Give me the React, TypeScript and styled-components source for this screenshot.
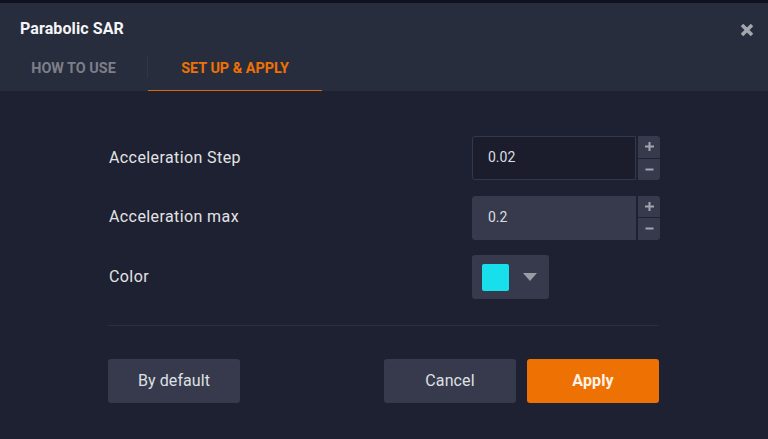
import React from 'react';
import styled, { createGlobalStyle } from 'styled-components';

const GlobalStyle = createGlobalStyle`
  html, body {
    margin: 0;
    padding: 0;
    background: #1e2131;
  }
  body {
    font-family: Roboto, "Liberation Sans", sans-serif;
  }
`;

const Modal = styled.div`
  width: 768px;
  height: 439px;
  overflow: hidden;
  background: #1e2131;
  border-top: 3px solid #11121f;
  box-sizing: border-box;
`;

const Header = styled.header`
  position: relative;
  height: 88px;
  background: #282d3d;
  display: flex;
  flex-direction: column;
  box-sizing: border-box;
  padding-top: 16px;
`;

const Title = styled.h1`
  margin: 0 0 0 20px;
  font-size: 16px;
  line-height: 20px;
  font-weight: 700;
  letter-spacing: 0.1px;
  color: #f4f5f6;
`;

const CloseButton = styled.button`
  position: absolute;
  top: 20px;
  right: 14px;
  width: 14px;
  height: 14px;
  padding: 0;
  border: 0;
  background: none;
  display: flex;
`;

const Tabs = styled.nav`
  display: flex;
  margin-top: auto;
  height: 36px;
`;

const Tab = styled.div<{ $active?: boolean }>`
  display: flex;
  align-items: center;
  justify-content: center;
  box-sizing: border-box;
  height: 100%;
  font-size: 14.4px;
  font-weight: 700;
  padding-bottom: 9px;
  padding-right: ${p => (p.$active ? '0' : '1px')};
  color: ${p => (p.$active ? '#ee7203' : '#7c7f8a')};
  width: ${p => (p.$active ? '174px' : '148px')};
  border-bottom: 1px solid ${p => (p.$active ? '#d9690b' : 'transparent')};
`;

const TabSep = styled.span`
  width: 1px;
  height: 22px;
  background: #31364a;
  margin: 1px 0 0 -1px;
`;

const Body = styled.main`
  padding: 45px 109px 0 108px;
  display: flex;
  flex-direction: column;
`;

const Row = styled.div`
  display: flex;
  align-items: center;
  justify-content: space-between;
  height: 44px;
  margin-bottom: 15.5px;
`;

const Label = styled.label`
  font-size: 16px;
  color: #e2e3e6;
  letter-spacing: 0.4px;
  margin-left: 1px;
  padding-bottom: 2px;
`;

const Field = styled.div`
  display: flex;
  width: 188px;
  height: 44px;
  gap: 2px;
  margin-right: -1px;
`;

const Input = styled.div<{ $focused?: boolean }>`
  flex: 1;
  box-sizing: border-box;
  display: flex;
  align-items: center;
  padding: 0 0 2px 15px;
  font-size: 14px;
  color: #dcdde0;
  border-radius: 3px 0 0 3px;
  background: ${p => (p.$focused ? '#1b1d2c' : '#363a4c')};
  border: 1px solid ${p => (p.$focused ? '#33384a' : '#363a4c')};
`;

const Steppers = styled.div`
  width: 22px;
  display: flex;
  flex-direction: column;
  gap: 1px;
`;

const Step = styled.div<{ $top?: boolean }>`
  flex: 1;
  background: #363a4c;
  display: flex;
  align-items: center;
  justify-content: center;
  border-radius: ${p => (p.$top ? '0 3px 0 0' : '0 0 3px 0')};
`;

const ColorSelect = styled.div`
  width: 77px;
  height: 44px;
  box-sizing: border-box;
  margin-right: 110px;
  background: #363a4c;
  border-radius: 3px;
  display: flex;
  align-items: center;
  padding-left: 10px;
`;

const Swatch = styled.span`
  width: 27px;
  height: 27px;
  border-radius: 2px;
  background: #17dfec;
`;

const Caret = styled.span`
  width: 0;
  height: 0;
  margin-left: 14px;
  border-left: 7px solid transparent;
  border-right: 7px solid transparent;
  border-top: 8px solid #9a9ca5;
`;

const Divider = styled.hr`
  width: 100%;
  margin: 10.5px 0 33px;
  border: 0;
  height: 1px;
  background: #2b2f40;
`;

const Footer = styled.footer`
  display: flex;
  gap: 11px;
`;

const Button = styled.button<{ $primary?: boolean }>`
  width: 132px;
  height: 44px;
  border: 0;
  border-radius: 3px;
  padding: 0 0 2px;
  font-family: inherit;
  font-size: 16px;
  letter-spacing: 0.1px;
  font-weight: ${p => (p.$primary ? 700 : 400)};
  color: ${p => (p.$primary ? '#fdf3e8' : '#dfe0e3')};
  background: ${p => (p.$primary ? '#ee7203' : '#363a4c')};
  &:first-child {
    margin-right: auto;
  }
`;

const Plus = () => (
  <svg width="11" height="11" viewBox="0 0 11 11">
    <path d="M5.5 1v9M1 5.5h9" stroke="#a3a5ad" strokeWidth="2" />
  </svg>
);

const Minus = () => (
  <svg width="9" height="9" viewBox="0 0 9 9">
    <path d="M0.5 4.5h8" stroke="#a3a5ad" strokeWidth="2" />
  </svg>
);

const NumberField = ({ value, focused }: { value: string; focused?: boolean }) => (
  <Field>
    <Input $focused={focused}>{value}</Input>
    <Steppers>
      <Step $top><Plus /></Step>
      <Step><Minus /></Step>
    </Steppers>
  </Field>
);

const App: React.FC = () => {
  return (
    <Modal>
      <GlobalStyle />
      <Header>
        <Title>Parabolic SAR</Title>
        <CloseButton aria-label="Close">
          <svg width="14" height="14" viewBox="0 0 14 14">
            <path d="M2 2l10 10M12 2L2 12" stroke="#a5a7af" strokeWidth="3.6" />
          </svg>
        </CloseButton>
        <Tabs>
          <Tab>HOW TO USE</Tab>
          <TabSep />
          <Tab $active>SET UP &amp; APPLY</Tab>
        </Tabs>
      </Header>
      <Body>
        <Row>
          <Label>Acceleration Step</Label>
          <NumberField value="0.02" focused />
        </Row>
        <Row>
          <Label>Acceleration max</Label>
          <NumberField value="0.2" />
        </Row>
        <Row>
          <Label>Color</Label>
          <ColorSelect>
            <Swatch />
            <Caret />
          </ColorSelect>
        </Row>
        <Divider />
        <Footer>
          <Button>By default</Button>
          <Button>Cancel</Button>
          <Button $primary>Apply</Button>
        </Footer>
      </Body>
    </Modal>
  );
};

export default App;
